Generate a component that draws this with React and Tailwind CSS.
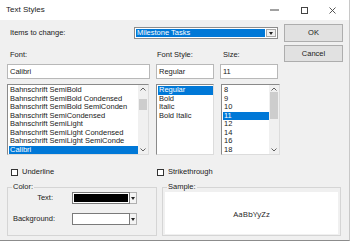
import React from "react";

const fonts = [
  "Bahnschrift SemiBold",
  "Bahnschrift SemiBold Condensed",
  "Bahnschrift SemiBold SemiConden",
  "Bahnschrift SemiCondensed",
  "Bahnschrift SemiLight",
  "Bahnschrift SemiLight Condensed",
  "Bahnschrift SemiLight SemiConde",
  "Calibri",
];
const styles = ["Regular", "Bold", "Italic", "Bold Italic"];
const sizes = ["8", "9", "10", "11", "12", "14", "16", "18"];

function ScrollBar({ thumbTop, thumbHeight }) {
  return (
    <div className="relative w-[10px] h-full bg-[#f0f0f0] flex flex-col items-center justify-between py-[2px]">
      <svg width="6" height="4" viewBox="0 0 6 4">
        <path d="M0.5 3.5 L3 1 L5.5 3.5" fill="none" stroke="#606060" strokeWidth="1" />
      </svg>
      <div
        className="absolute left-[1px] w-[8px] bg-[#cdcdcd]"
        style={{ top: thumbTop, height: thumbHeight }}
      />
      <svg width="6" height="4" viewBox="0 0 6 4">
        <path d="M0.5 0.5 L3 3 L5.5 0.5" fill="none" stroke="#606060" strokeWidth="1" />
      </svg>
    </div>
  );
}

function ListBox({ items, selected, width, scroll }) {
  return (
    <div
      className="h-[71px] flex bg-white border border-t-[#8a8a8a] border-l-[#8a8a8a] border-r-[#dcdcdc] border-b-[#dcdcdc]"
      style={{ width }}
    >
      <div className="flex-1 flex flex-col pt-[1px] pl-[1px]">
        {items.map((it) => (
          <div
            key={it}
            className={
              "h-[8.5px] leading-[8.5px] pl-[1px] whitespace-nowrap overflow-hidden " +
              (it === selected ? "bg-[#0078d7] text-white" : "text-[#1a1a1a]")
            }
          >
            {it}
          </div>
        ))}
      </div>
      {scroll && <ScrollBar thumbTop={scroll[0]} thumbHeight={scroll[1]} />}
    </div>
  );
}

function ColorPick({ fill }) {
  return (
    <div className="flex h-[12px]">
      <div className="w-[58px] border border-[#7a7a7a] bg-white p-[1px]">
        <div className="w-full h-full" style={{ background: fill }} />
      </div>
      <div className="w-[7px] border border-l-0 border-[#b0b0b0] bg-[#f4f4f4] flex items-center justify-center">
        <svg width="4" height="3" viewBox="0 0 4 3">
          <path d="M0 0 L4 0 L2 3 Z" fill="#222" />
        </svg>
      </div>
    </div>
  );
}

export default function App() {
  return (
    <div
      className="w-[350px] h-[241px] bg-[#f0f0f0] overflow-hidden text-[7.5px] text-[#1a1a1a] border-b border-b-[#8c8c8c] border-r border-r-[#c8c8c8]"
      style={{ fontFamily: '"Liberation Sans", Arial, sans-serif' }}
    >
      {/* title bar */}
      <div className="h-[20px] bg-white flex items-center">
        <span className="pl-[6px] text-[8px] text-[#222]">Text Styles</span>
        <div className="ml-auto flex items-center h-full">
          <div className="w-[30px] flex justify-center">
            <svg width="9" height="2" viewBox="0 0 9 2">
              <path d="M0 1 H9" stroke="#444" strokeWidth="1" />
            </svg>
          </div>
          <div className="w-[30px] flex justify-center">
            <svg width="7" height="7" viewBox="0 0 7 7">
              <rect x="0.5" y="0.5" width="6" height="6" fill="none" stroke="#444" strokeWidth="1" />
            </svg>
          </div>
          <div className="w-[30px] flex justify-center pr-[4px]">
            <svg width="7" height="7" viewBox="0 0 7 7">
              <path d="M0.5 0.5 L6.5 6.5 M6.5 0.5 L0.5 6.5" stroke="#444" strokeWidth="0.9" />
            </svg>
          </div>
        </div>
      </div>

      <div className="flex">
        {/* left column */}
        <div className="w-[284px] pl-[7px] flex flex-col">
          <div className="h-[14px] mt-[6px] flex items-center">
            <span className="w-[127px] pl-[3px]">Items to change:</span>
            <div className="w-[144px] h-[12px] flex border border-[#8c8c8c] bg-white p-[1px]">
              <div className="flex-1 bg-[#0078d7] text-white leading-[8px] pl-[1px]">Milestone Tasks</div>
              <div className="w-[10px] ml-[1px] bg-[#f0f0f0] border border-[#a8a8a8] flex items-center justify-center">
                <svg width="4" height="3" viewBox="0 0 4 3">
                  <path d="M0 0 L4 0 L2 3 Z" fill="#222" />
                </svg>
              </div>
            </div>
          </div>

          <div className="h-[10px] mt-[10px] flex items-center">
            <span className="w-[149px] pl-[3px]">Font:</span>
            <span className="w-[65px] pl-[1px]">Font Style:</span>
            <span className="pl-[2px]">Size:</span>
          </div>

          <div className="h-[15px] mt-[4px] flex gap-[6px]">
            <div className="w-[143px] bg-white border border-[#b8b8b8] pl-[2px] flex items-center">Calibri</div>
            <div className="w-[58px] bg-white border border-[#b8b8b8] pl-[2px] flex items-center">Regular</div>
            <div className="w-[58px] bg-white border border-[#b8b8b8] pl-[2px] flex items-center">11</div>
          </div>

          <div className="mt-[5px] flex gap-[7px]">
            <ListBox items={fonts} selected="Calibri" width={142} scroll={[14, 11]} />
            <ListBox items={styles} selected="Regular" width={58} />
            <ListBox items={sizes} selected="11" width={59} scroll={[7, 27]} />
          </div>

          <div className="h-[10px] mt-[12px] flex items-center">
            <div className="w-[150px] flex items-center pl-[4px]">
              <div className="w-[7px] h-[7px] border border-[#333] bg-white" />
              <span className="ml-[4px]">Underline</span>
            </div>
            <div className="flex items-center">
              <div className="w-[7px] h-[7px] border border-[#333] bg-white" />
              <span className="ml-[4px]">Strikethrough</span>
            </div>
          </div>
        </div>

        {/* right column: buttons */}
        <div className="w-[59px] mt-[4px] flex flex-col gap-[3px]">
          <div className="h-[18px] bg-[#e1e1e1] border border-[#adadad] flex items-center justify-center">OK</div>
          <div className="h-[17px] bg-[#e1e1e1] border border-[#adadad] flex items-center justify-center">Cancel</div>
        </div>
      </div>

      {/* group boxes */}
      <div className="flex pl-[7px] mt-[10px] gap-[5px]">
        <div className="relative w-[150px] h-[49px] border border-[#d5d5d5]">
          <span className="absolute -top-[5px] left-[4px] bg-[#f0f0f0] px-[1px] leading-[8px]">Color:</span>
          <div className="flex items-center mt-[4px] h-[12px]">
            <span className="w-[45px] text-right">Text:</span>
            <div className="ml-[19px]">
              <ColorPick fill="#000" />
            </div>
          </div>
          <div className="flex items-center mt-[9px] h-[12px]">
            <span className="w-[47px] text-right">Background:</span>
            <div className="ml-[17px]">
              <ColorPick fill="#fff" />
            </div>
          </div>
        </div>
        <div className="relative w-[179px] h-[49px] border border-[#d5d5d5] pt-[4px] px-[2px]">
          <span className="absolute -top-[5px] left-[4px] bg-[#f0f0f0] px-[1px] leading-[8px]">Sample:</span>
          <div className="h-[42px] bg-white flex items-center justify-center pt-[2px]">
            <span className="text-[8px]" style={{ fontFamily: '"Open Sans", Calibri, sans-serif' }}>AaBbYyZz</span>
          </div>
        </div>
      </div>
    </div>
  );
}
